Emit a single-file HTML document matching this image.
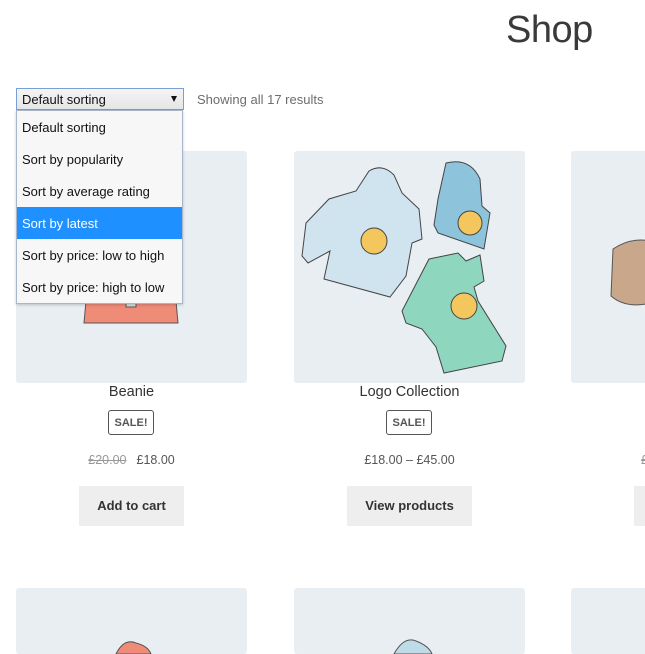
<!DOCTYPE html>
<html><head><meta charset="utf-8"><style>
*{margin:0;padding:0;box-sizing:border-box}
html,body{width:645px;height:654px;overflow:hidden}
body{background:#fff;font-family:"Liberation Sans",sans-serif;color:#333;position:relative}
.h1{position:absolute;left:506px;top:9px;font-size:38px;font-weight:normal;color:#3a3a3a;letter-spacing:-0.5px}
.sel{position:absolute;left:16px;top:88px;width:168px;height:22px;border:1px solid #7a9fd6;background:linear-gradient(#f4f4f4,#e6e6e6);font-size:13px;color:#111;padding:3px 5px;line-height:15px}
.sel:after{content:"";position:absolute;right:6px;top:7px;border-left:3.5px solid transparent;border-right:3.5px solid transparent;border-top:6px solid #111}
.count{position:absolute;left:197px;top:92px;font-size:13px;color:#6d6d6d}
.dd{position:absolute;left:16px;top:110px;width:167px;height:194px;background:#f7f7f7;border:1px solid #a9b5c9;box-shadow:0 1px 3px rgba(0,0,0,.2);z-index:5}
.dd div{height:32px;line-height:34px;padding-left:5px;font-size:13px;color:#111}
.dd .on{background:#1e90ff;color:#fff}
.card{position:absolute;width:231px;height:232px;background:#e9eef2;border-radius:3px;overflow:hidden}
.t{position:absolute;width:231px;text-align:center;font-size:14.5px;color:#333}
.sale{position:absolute;width:46px;height:25px;border:1px solid #555;border-radius:3px;font-size:11px;font-weight:bold;color:#555;text-align:center;line-height:25px}
.price{position:absolute;width:231px;text-align:center;font-size:12.5px;color:#555}
.price s{color:#999;margin-right:10px}
.btn{position:absolute;height:40px;background:#eeeeee;font-size:13px;font-weight:bold;color:#333;text-align:center;line-height:40px}
</style></head><body>
<div class="h1">Shop</div>
<div class="sel">Default sorting</div>
<div class="count">Showing all 17 results</div>
<div class="dd">
<div>Default sorting</div><div>Sort by popularity</div><div>Sort by average rating</div>
<div class="on">Sort by latest</div><div>Sort by price: low to high</div><div>Sort by price: high to low</div>
</div>

<div class="card" style="left:16px;top:151px">
<svg width="231" height="232"><path d="M70 150 L160 150 L162 172 L68 172 Z" fill="#ef8c78" stroke="#555"/><rect x="110" y="150" width="10" height="6" fill="#ddd" stroke="#555"/></svg>
</div>
<div class="card" style="left:294px;top:151px">
<svg width="231" height="232" fill="none" stroke="#444" stroke-width="1">
<path d="M75 20 Q88 12 100 24 L108 42 L125 58 L128 88 L118 92 L112 125 L96 146 L30 128 L36 100 L14 112 L8 105 L12 72 L35 48 L62 40 Z" fill="#cfe4ef"/>
<path d="M152 12 Q176 6 186 28 L188 55 L196 62 L190 98 L144 82 L140 74 L144 48 Z" fill="#8ec3dc"/>
<circle cx="80" cy="90" r="13" fill="#f3c75d"/>
<circle cx="176" cy="72" r="12" fill="#f3c75d"/>
<path d="M135 108 L164 102 L172 110 L186 104 L190 130 L180 136 L184 150 L212 195 L208 210 L150 222 L142 196 L128 178 L112 172 L108 160 Z" fill="#8ed6be"/>
<circle cx="170" cy="155" r="13" fill="#f3c75d"/>
</svg></div>
<div class="card" style="left:571px;top:151px">
<svg width="231" height="232"><path d="M42 98 Q60 86 80 90 L80 152 Q55 158 40 145 Z" fill="#c9a78a" stroke="#555"/></svg>
</div>

<div class="t" style="left:16px;top:384px">Beanie</div>
<div class="t" style="left:294px;top:384px">Logo Collection</div>
<div class="sale" style="left:108px;top:410px">SALE!</div>
<div class="sale" style="left:386px;top:410px">SALE!</div>
<div class="price" style="left:16px;top:453px"><s>£20.00</s>£18.00</div>
<div class="price" style="left:294px;top:453px">£18.00 – £45.00</div>
<div class="price" style="left:571px;top:453px;text-align:left;padding-left:70px"><s>£</s></div>
<div class="btn" style="left:79px;top:486px;width:105px">Add to cart</div>
<div class="btn" style="left:347px;top:486px;width:125px">View products</div>
<div class="btn" style="left:634px;top:486px;width:40px"></div>

<div class="card" style="left:16px;top:588px;height:66px"><svg width="231" height="66"><path d="M100 66 Q108 50 120 55 Q132 58 135 66 Z" fill="#ef8c78" stroke="#555"/></svg></div>
<div class="card" style="left:294px;top:588px;height:66px"><svg width="231" height="66"><path d="M100 66 Q110 48 122 53 Q135 58 138 66 Z" fill="#bfdbe8" stroke="#555"/></svg></div>
<div class="card" style="left:571px;top:588px;height:66px"></div>
</body></html>
